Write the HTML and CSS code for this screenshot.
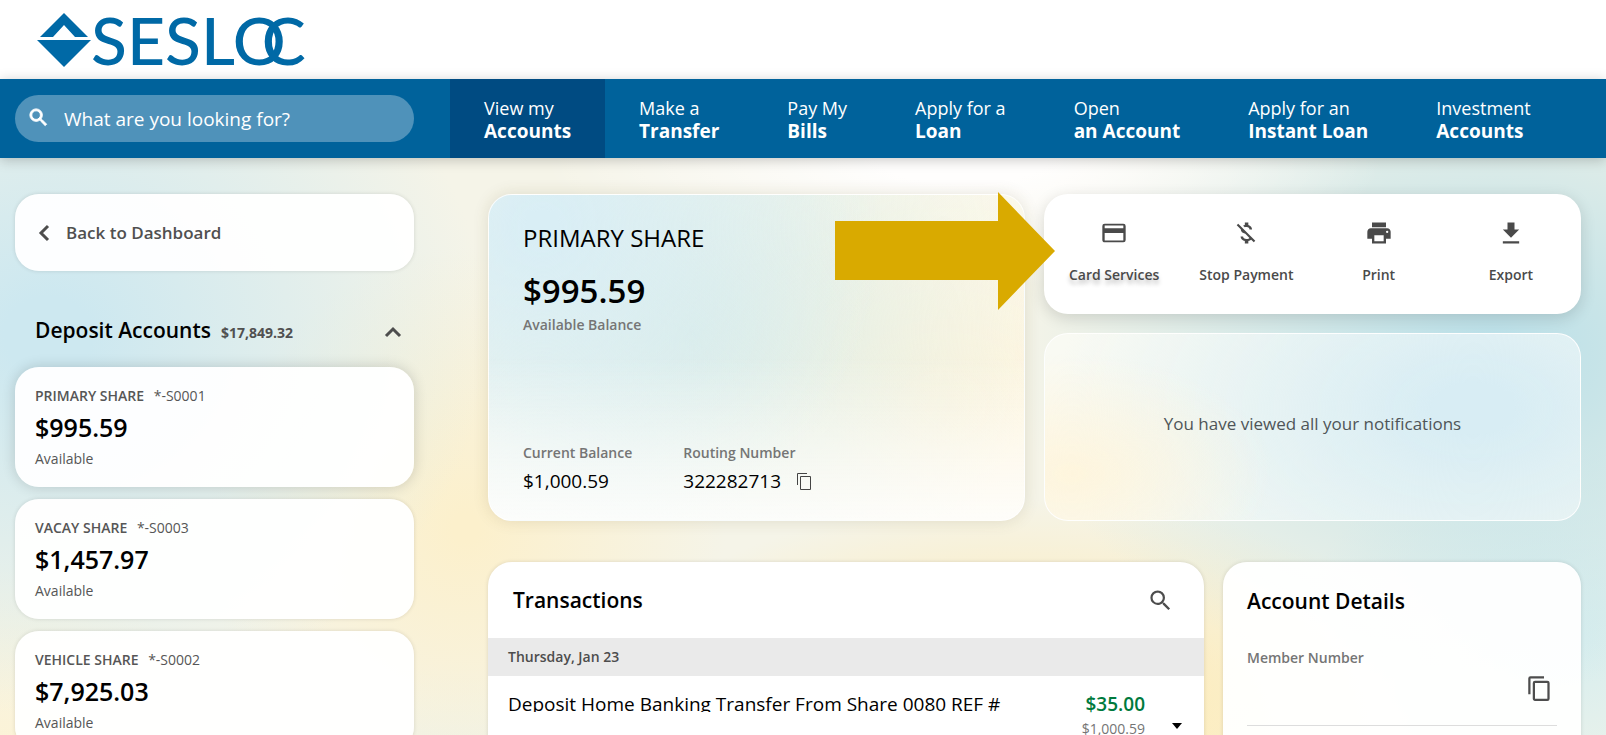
FILE: index.html
```html
<!DOCTYPE html>
<html lang="en">
<head>
  <meta charset="UTF-8">
  <meta name="viewport" content="width=device-width, initial-scale=1.0">
  <title>SESLOC - Primary Share</title>
  <link rel="stylesheet" href="styles.css">
</head>
<body>

  <header class="site-header">
    <a href="#" class="logo">
      <svg class="logo-mark" viewBox="0 0 54 56" aria-hidden="true">
        <path d="M27 1 3 25H16L27 13 38 25H51Z"/>
        <path d="M0 28H54L27 55Z"/>
      </svg>
      <span class="logo-text">SESLO<span class="logo-link">C</span></span>
    </a>
  </header>

  <!-- Main nav -->
  <nav class="navbar">
    <form class="search">
      <label for="site-search" aria-label="Search">
        <svg viewBox="0 0 24 24"><path d="M15.5 14h-.79l-.28-.27A6.47 6.47 0 0 0 16 9.5 6.5 6.5 0 1 0 9.5 16c1.61 0 3.09-.59 4.23-1.57l.27.28v.79l5 4.99L20.49 19l-4.99-5zm-6 0C7.01 14 5 11.99 5 9.5S7.01 5 9.5 5 14 7.01 14 9.5 11.99 14 9.5 14z"/></svg>
      </label>
      <input type="text" id="site-search" placeholder="What are you looking for?">
    </form>
    <div class="nav-links">
      <a href="#" class="active">View my <strong>Accounts</strong></a>
      <a href="#">Make a <strong>Transfer</strong></a>
      <a href="#">Pay My <strong>Bills</strong></a>
      <a href="#">Apply for a <strong>Loan</strong></a>
      <a href="#">Open <strong>an Account</strong></a>
      <a href="#">Apply for an <strong>Instant Loan</strong></a>
      <a href="#">Investment <strong>Accounts</strong></a>
    </div>
  </nav>

  <div class="page">

    <!-- Sidebar -->
    <aside class="sidebar">
      <a href="#" class="card back">
        <svg viewBox="0 0 12 18"><path d="M10 2 3 9l7 7"/></svg>
        Back to Dashboard
      </a>

      <div class="group-head">
        <h2>Deposit Accounts</h2>
        <span class="group-total">$17,849.32</span>
        <button type="button" aria-label="Collapse">
          <svg viewBox="0 0 18 12"><path d="m2 10 7-7 7 7"/></svg>
        </button>
      </div>

      <a href="#" class="card account selected">
        <span class="account-name"><b>PRIMARY SHARE</b> <span>*-S0001</span></span>
        <span class="account-amount">$995.59</span>
        <span class="account-note">Available</span>
      </a>
      <a href="#" class="card account">
        <span class="account-name"><b>VACAY SHARE</b> <span>*-S0003</span></span>
        <span class="account-amount">$1,457.97</span>
        <span class="account-note">Available</span>
      </a>
      <a href="#" class="card account">
        <span class="account-name"><b>VEHICLE SHARE</b> <span>*-S0002</span></span>
        <span class="account-amount">$7,925.03</span>
        <span class="account-note">Available</span>
      </a>
    </aside>

    <main class="content">
      <div class="row halves">

        <!-- Account summary -->
        <section class="summary">
          <h1>PRIMARY SHARE</h1>
          <div class="balance">$995.59</div>
          <div class="label">Available Balance</div>
          <div class="facts">
            <div>
              <div class="label">Current Balance</div>
              <div class="value">$1,000.59</div>
            </div>
            <div>
              <div class="label">Routing Number</div>
              <div class="value">
                322282713
                <button type="button" aria-label="Copy routing number">
                  <svg class="copy-small" viewBox="0 0 16 19"><path d="M1.5 13V1.5H11M4.5 4.5H14.5V17.5H4.5Z"/></svg>
                </button>
              </div>
            </div>
          </div>
        </section>

        <div class="column">
          <section class="actions">
            <svg class="pointer" viewBox="0 0 220 118" aria-hidden="true"><path d="M0 29H163V0L220 59 163 118V88H0Z"/></svg>
            <button type="button" class="hovered">
              <svg viewBox="0 0 24 24"><path fill-rule="evenodd" d="M20 4H4a2 2 0 0 0-2 2v12c0 1.11.89 2 2 2h16a2 2 0 0 0 2-2V6a2 2 0 0 0-2-2zm0 14.500H4V12h16v6.500zm0-10.500H4V5.500h16V8z"/></svg>
              Card Services
            </button>
            <button type="button">
              <svg viewBox="0 0 24 24"><path d="M12.5 6.9c1.78 0 2.44.85 2.5 2.1h2.21c-.07-1.72-1.12-3.3-3.21-3.81V3h-3v2.16c-.53.12-1.03.3-1.48.54l1.47 1.47c.41-.17.91-.27 1.51-.27zM5.33 4.06 4.06 5.33 7.5 8.77c0 2.08 1.56 3.21 3.91 3.91l3.51 3.51c-.34.48-1.05.91-2.42.91-2.06 0-2.87-.92-2.98-2.1h-2.2c.12 2.19 1.76 3.42 3.68 3.83V21h3v-2.15c.96-.18 1.82-.55 2.45-1.12l2.22 2.22 1.27-1.27L5.33 4.06z"/></svg>
              Stop Payment
            </button>
            <button type="button">
              <svg viewBox="0 0 24 24"><path fill-rule="evenodd" d="M19 8H5c-1.66 0-3 1.34-3 3v6h4v4h12v-4h4v-6c0-1.66-1.34-3-3-3zm-3 11H8v-5h8v5zm3-7a1 1 0 1 1 0-2 1 1 0 0 1 0 2zM18 3H6v4h12V3z"/></svg>
              Print
            </button>
            <button type="button">
              <svg viewBox="0 0 24 24"><path d="M19 9h-4V3H9v6H5l7 7 7-7zM5 19v2h14v-2H5z"/></svg>
              Export
            </button>
          </section>
          <section class="notifications">
            <p>You have viewed all your notifications</p>
          </section>
        </div>
      </div>

      <div class="row thirds">

        <!-- Transactions -->
        <section class="card transactions">
          <div class="transactions-head">
            <h2>Transactions</h2>
            <button type="button" aria-label="Search transactions">
              <svg viewBox="0 0 24 24"><path d="M15.5 14h-.79l-.28-.27A6.47 6.47 0 0 0 16 9.5 6.5 6.5 0 1 0 9.5 16c1.61 0 3.09-.59 4.23-1.57l.27.28v.79l5 4.99L20.49 19l-4.99-5zm-6 0C7.01 14 5 11.99 5 9.5S7.01 5 9.5 5 14 7.01 14 9.5 11.99 14 9.5 14z"/></svg>
            </button>
          </div>
          <table>
            <thead>
              <tr><th colspan="3">Thursday, Jan 23</th></tr>
            </thead>
            <tbody>
              <tr>
                <td><div class="description">Deposit Home Banking Transfer From Share 0080 REF #</div></td>
                <td class="amount">$35.00<span>$1,000.59</span></td>
                <td class="toggle">
                  <button type="button" aria-label="Show details">
                    <svg viewBox="0 0 10 6"><path d="M0 0H10L5 6Z"/></svg>
                  </button>
                </td>
              </tr>
            </tbody>
          </table>
        </section>

        <!-- Account details -->
        <section class="card details">
          <h2>Account Details</h2>
          <div class="label">Member Number</div>
          <div class="detail-value">
            <button type="button" aria-label="Copy member number">
              <svg viewBox="0 0 24 24"><path d="M16 1H4a2 2 0 0 0-2 2v14h2V3h12V1zm3 4H8a2 2 0 0 0-2 2v14c0 1.1.9 2 2 2h11a2 2 0 0 0 2-2V7a2 2 0 0 0-2-2zm0 16H8V7h11v14z"/></svg>
            </button>
          </div>
        </section>
      </div>
    </main>
  </div>

</body>
</html>
```
FILE: styles.css
```css
* { margin: 0; padding: 0; box-sizing: border-box; }
html, body { height: 100%; }
body {
  font-family: "Open Sans", "Noto Sans", sans-serif; font-size: 14px; line-height: 20px; color: #000;
  display: flex; flex-direction: column; overflow: hidden;
  background: #f3f3e6;
}
button { font: inherit; color: inherit; background: none; border: none; cursor: pointer; }
a { color: inherit; text-decoration: none; }
svg { display: block; fill: currentColor; }
h2 { font-size: 21px; line-height: 30px; font-weight: 600; }

.site-header { background: #fff; height: 79px; flex-shrink: 0; padding: 12px 37px; }
.logo { display: flex; align-items: center; color: #0069a6; width: max-content; }
.logo-mark { width: 54px; height: 56px; }
.logo-text { font-family: Lato, sans-serif; font-size: 66px; line-height: 56px; font-weight: 500; }
.logo-link { margin-left: -24px; }

/* Navbar */
.navbar {
  display: flex; align-items: center; flex-shrink: 0; height: 79px; padding-left: 15px;
  background: #00629b; color: #fff; box-shadow: 0 2px 12px rgba(0, 0, 0, 0.22);
  position: relative; z-index: 1;
}
.search {
  display: flex; align-items: center; width: 399px; height: 47px; margin-right: 36px;
  background: #4f92ba; border-radius: 24px;
}
.search svg { width: 23px; height: 23px; margin: 0 14px 2px 12px; stroke: #fff; }
.search input {
  flex: 1; min-width: 0; height: 47px; background: none; border: none; outline: none;
  font: inherit; font-size: 19px; color: #fff;
}
.search input::placeholder { color: #fff; opacity: 1; }
.nav-links { display: flex; align-self: stretch; }
.nav-links a {
  display: flex; flex-direction: column; justify-content: center;
  padding: 3px 34px 0; font-size: 18px; line-height: 23px; white-space: nowrap;
}
.nav-links a.active { background: #004b82; }
.nav-links strong { font-size: 19px; font-weight: 700; }

/* Page */
.page {
  flex: 1; display: flex; gap: 74px; align-items: flex-start; padding: 36px 25px 0 15px;
  background:
    radial-gradient(ellipse 420px 130px at 60% 0, #fffefd 20%, rgba(255, 255, 255, 0) 100%),
    radial-gradient(ellipse 440px 380px at 3% 22%, #cde8f0 10%, rgba(205, 232, 240, 0) 100%),
    radial-gradient(ellipse 260px 280px at 29% 46%, #fcf0cc 5%, rgba(252, 240, 204, 0) 100%),
    radial-gradient(ellipse 480px 340px at 93% 24%, #b9dfe8 0, rgba(199, 230, 237, 0) 100%),
    radial-gradient(ellipse 420px 190px at 64% 66%, #ffe9ae 0, rgba(253, 236, 186, 0) 100%),
    radial-gradient(ellipse 260px 200px at 97% 60%, #d9eeee 10%, rgba(217, 238, 238, 0) 100%),
    radial-gradient(ellipse 240px 240px at 0 80%, #fdf3d4 10%, rgba(253, 243, 212, 0) 100%),
    radial-gradient(ellipse 200px 240px at 28% 92%, #e6f1ee 10%, rgba(230, 241, 238, 0) 100%),
    radial-gradient(ellipse 220px 240px at 76% 88%, #fbf1ca 10%, rgba(251, 241, 202, 0) 100%),
    #f5f4e8;
}
.card {
  background: rgba(255, 255, 255, 0.95); border-radius: 24px;
  box-shadow: 0 0 4px rgba(0, 0, 0, 0.12);
}
.label { font-weight: 600; color: #757575; }

/* Sidebar */
.sidebar { width: 399px; flex-shrink: 0; display: flex; flex-direction: column; gap: 12px; }
.back {
  display: flex; align-items: center; gap: 16px; height: 77px; padding: 0 23px;
  font-size: 17px; font-weight: 600; color: #505050;
}
.back svg { width: 12px; height: 18px; }
.back path, .group-head path { fill: none; stroke: #4d4d4d; stroke-width: 3; }
.group-head { display: flex; align-items: baseline; height: 72px; padding: 32px 12px 0 20px; }
.group-total { margin-left: 10px; font-weight: 700; color: #505050; }
.group-head button { margin-left: auto; }
.group-head button svg { width: 18px; height: 12px; }
.account { display: flex; flex-direction: column; height: 120px; padding: 19px 20px; color: #565656; }
.selected { box-shadow: 0 0 14px rgba(0, 0, 0, 0.16); }
.account-name b { font-weight: 600; margin-right: 6px; }
.account-amount { font-size: 25px; line-height: 34px; font-weight: 600; color: #000; margin: 4px 0 5px; }

/* Content */
.content { flex: 1; min-width: 0; display: flex; flex-direction: column; gap: 41px; }
.row { display: grid; gap: 19px; }
.halves { grid-template-columns: 1fr 1fr; }
.thirds { grid-template-columns: 2fr 1fr; align-items: start; }
.column { display: flex; flex-direction: column; gap: 19px; }

.summary {
  display: flex; flex-direction: column; padding: 27px 34px 26px;
  border: 1px solid rgba(255, 255, 255, 0.8); border-radius: 24px;
  box-shadow: 0 0 16px rgba(90, 80, 30, 0.14);
  background:
    linear-gradient(rgba(255, 255, 255, 0) 50%, rgba(255, 255, 255, 0.8)),
    radial-gradient(ellipse 340px 340px at 10% 10%, #d9eef5 5%, rgba(217, 238, 245, 0) 100%),
    radial-gradient(ellipse 340px 320px at 38% 42%, #dbece6 0, rgba(221, 238, 232, 0) 100%),
    radial-gradient(ellipse 320px 260px at 85% 65%, #fdf4dc 5%, rgba(253, 244, 220, 0) 100%),
    #faf9ee;
}
.summary h1 { font-size: 24px; line-height: 32px; font-weight: 500; }
.balance { font-size: 33px; line-height: 46px; font-weight: 600; margin: 14px 0 1px; }
.facts { display: flex; gap: 51px; margin-top: auto; }
.value { display: flex; align-items: center; gap: 15px; font-size: 19px; line-height: 26px; margin-top: 5px; }
.copy-small { width: 16px; height: 19px; }
.copy-small path { fill: none; stroke: #444; stroke-width: 1; }

.actions {
  position: relative; display: grid; grid-template-columns: repeat(4, 1fr); height: 120px; padding: 0 4px;
  background: #fff; border-radius: 24px; box-shadow: 0 4px 16px rgba(0, 0, 0, 0.14);
}
.actions button {
  display: flex; flex-direction: column; align-items: center; gap: 18px; padding-top: 25px;
  font-weight: 600; color: #4a4a4a; white-space: nowrap;
}
.actions button svg { width: 28px; height: 28px; }
.actions .hovered { text-shadow: 0 4px 4px rgba(0, 0, 0, 0.25); }
.actions .pointer { position: absolute; top: -2px; left: -209px; width: 220px; height: 118px; fill: #d9aa00; z-index: 2; }
.notifications {
  display: flex; align-items: center; justify-content: center; height: 188px; padding-bottom: 7px;
  border: 1px solid rgba(255, 255, 255, 0.9); border-radius: 24px;
  font-size: 17px; color: #4f5558;
  background:
    radial-gradient(ellipse 200px 120px at 5% 75%, #fef5dd 0, rgba(254, 245, 221, 0) 100%),
    radial-gradient(ellipse 420px 260px at 80% 40%, #d8edf4 10%, rgba(216, 237, 244, 0) 100%),
    #f9faf3;
}

.transactions { background: #fff; overflow: hidden; height: 400px; }
.transactions-head { display: flex; align-items: center; justify-content: space-between; height: 76px; padding: 0 30px 0 25px; }
.transactions-head svg { width: 27px; height: 27px; color: #4d4d4d; }
table { width: 100%; border-collapse: collapse; }
th { height: 38px; padding: 0 20px; background: #eaeaea; color: #4d4d4d; font-weight: 600; text-align: left; }
td { vertical-align: top; padding-top: 15px; }
td:first-child { padding-left: 20px; }
.description { font-size: 19px; line-height: 26px; height: 21px; overflow: hidden; }
.amount { font-size: 19px; line-height: 26px; font-weight: 600; color: #007a3d; text-align: right; }
.amount span { display: block; font-size: 14px; line-height: 24px; font-weight: 400; color: #757575; }
.toggle { width: 59px; }
.toggle button { display: block; margin: 32px 0 0 26px; }
.toggle svg { width: 12px; height: 6px; }

.details { height: 400px; padding: 24px; }
.details .label { margin-top: 32px; }
.detail-value { display: flex; justify-content: flex-end; padding: 7px 4px 23px; border-bottom: 1px solid #ddd; }
.detail-value svg { width: 27px; height: 27px; color: #4d4d4d; }
```
